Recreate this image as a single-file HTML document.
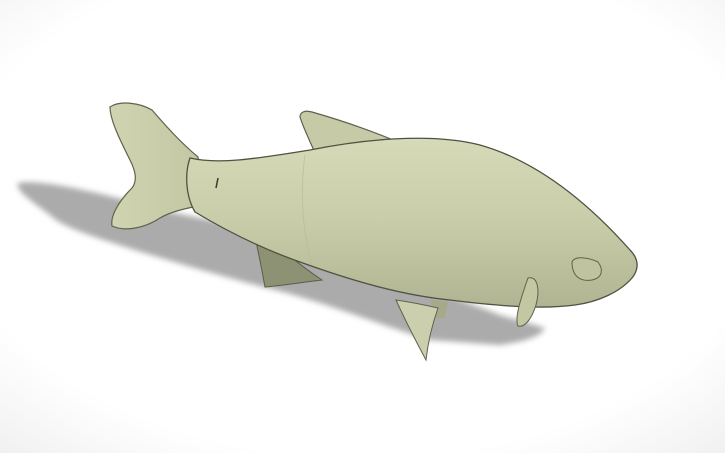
<!DOCTYPE html>
<html><head><style>
html,body{margin:0;padding:0;width:725px;height:453px;overflow:hidden;background:#fff}
</style></head><body>
<svg width="725" height="453" viewBox="0 0 725 453" xmlns="http://www.w3.org/2000/svg">
<defs>
<radialGradient id="bg" cx="50%" cy="45%" r="80%">
<stop offset="0.7" stop-color="#ffffff"/><stop offset="1" stop-color="#ececec"/>
</radialGradient>
<filter id="bl"><feGaussianBlur stdDeviation="3"/></filter>
<linearGradient id="body" x1="0" y1="0" x2="0" y2="1">
<stop offset="0" stop-color="#d6dab8"/><stop offset="0.5" stop-color="#c8cca8"/><stop offset="1" stop-color="#b0b492"/>
</linearGradient>
<linearGradient id="tail" x1="0" y1="0" x2="1" y2="0">
<stop offset="0" stop-color="#d0d4b0"/><stop offset="1" stop-color="#c2c6a2"/>
</linearGradient>
</defs>
<rect width="725" height="453" fill="url(#bg)"/>
<path filter="url(#bl)" fill="#ababab" d="M18,183 C40,178 110,195 170,212 L250,228 C330,250 420,285 500,315 L545,328 C540,338 520,342 500,345 L430,340 C380,325 320,300 263,287 C200,270 150,255 110,242 C80,232 60,225 50,215 C30,200 15,190 18,183 Z"/>
<path fill="#8e9275" stroke="#5a5d48" stroke-width="1" d="M253,228 C258,250 262,270 265,287 C285,285 305,282 322,280 C300,265 280,250 268,232 Z"/>
<path fill="#a6aa88" d="M430,300 L448,302 L445,318 L435,318 Z"/>
<path fill="url(#tail)" stroke="#5f624c" stroke-width="1.2" d="M110,107 C120,100 140,103 152,110 C165,125 180,142 198,157 L205,205 C185,208 170,212 160,218 C145,228 125,232 112,226 C110,215 120,200 132,188 C138,180 135,170 130,160 C120,140 110,120 110,107 Z"/>
<path fill="#c6caa6" stroke="#5f624c" stroke-width="1.2" d="M300,117 C300,112 305,110 312,112 C340,120 375,132 405,145 L318,160 C312,145 304,130 300,117 Z"/>
<path fill="url(#body)" stroke="#4f5240" stroke-width="1.3" d="M190,158 C220,165 260,158 310,150 C360,140 430,132 480,145 C540,162 590,205 630,250 C638,258 640,268 632,278 C620,292 598,302 575,305 C540,310 490,305 450,300 C400,295 350,280 300,262 C260,248 225,230 195,212 C185,195 185,172 190,158 Z"/>
<path fill="none" stroke="#b8bc98" stroke-width="1" opacity="0.7" d="M305,155 C300,190 302,230 312,265"/>
<path fill="#bfc3a0" stroke="#5f624c" stroke-width="1" d="M572,262 C575,255 590,258 598,262 C604,270 602,278 592,280 C580,282 572,276 572,262 Z"/>
<path fill="#cbcfae" stroke="#5f624c" stroke-width="1" d="M396,300 C410,302 425,305 438,308 C432,325 428,342 426,360 C418,345 405,320 396,300 Z"/>
<path fill="#c3c7a2" stroke="#5f624c" stroke-width="1" d="M528,278 C538,276 540,290 536,305 C532,318 525,328 518,326 C514,318 522,295 528,278 Z"/>
<path fill="none" stroke="#3a3c30" stroke-width="1.5" d="M218,178 L216,188"/>
</svg>
</body></html>
